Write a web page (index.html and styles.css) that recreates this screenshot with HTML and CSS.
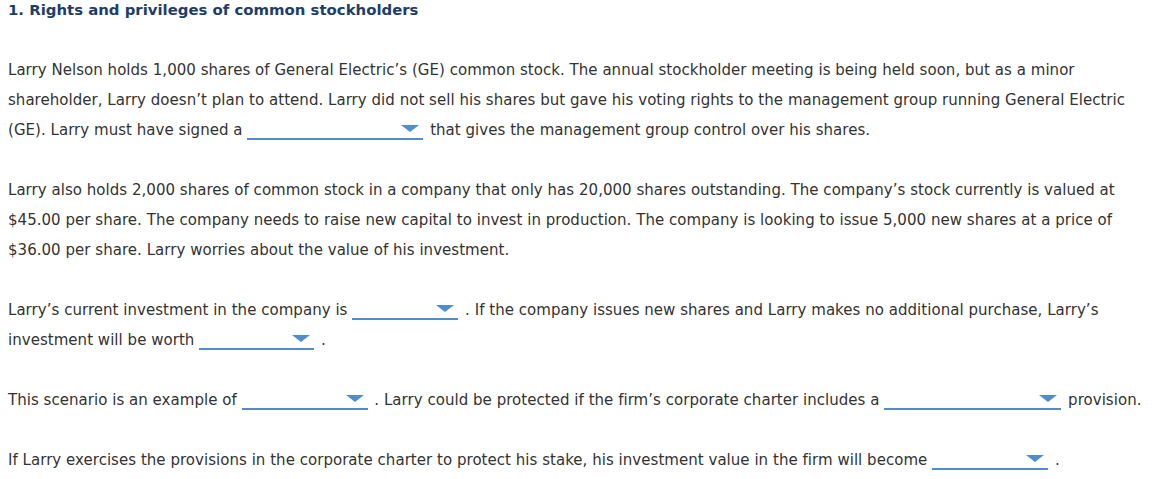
FILE: index.html
```html
<!DOCTYPE html>
<html lang="en">
<head>
<meta charset="utf-8">
<title>Rights and privileges of common stockholders</title>
<link rel="stylesheet" href="styles.css">
</head>
<body>
<div class="page">
  <h1 class="title">1. Rights and privileges of common stockholders</h1>
  <p class="para">Larry Nelson holds 1,000 shares of General Electric’s (GE) common stock. The annual stockholder meeting is being held soon, but as a minor shareholder, Larry doesn’t plan to attend. Larry did not sell his shares but gave his voting rights to the management group running General Electric (GE). Larry must have signed a <span class="dd w176"><svg class="tri" viewBox="0 0 18 7" width="18" height="7"><polygon points="0,0 18,0 9,7" /></svg></span> that gives the management group control over his shares.</p>
  <p class="para">Larry also holds 2,000 shares of common stock in a company that only has 20,000 shares outstanding. The company’s stock currently is valued at $45.00 per share. The company needs to raise new capital to invest in production. The company is looking to issue 5,000 new shares at a price of $36.00 per share. Larry worries about the value of his investment.</p>
  <p class="para">Larry’s current investment in the company is <span class="dd w106"><svg class="tri" viewBox="0 0 18 7" width="18" height="7"><polygon points="0,0 18,0 9,7" /></svg></span> . If the company issues new shares and Larry makes no additional purchase, Larry’s investment will be worth <span class="dd w115"><svg class="tri" viewBox="0 0 18 7" width="18" height="7"><polygon points="0,0 18,0 9,7" /></svg></span> .</p>
  <p class="para">This scenario is an example of <span class="dd w126"><svg class="tri" viewBox="0 0 18 7" width="18" height="7"><polygon points="0,0 18,0 9,7" /></svg></span> . Larry could be protected if the firm’s corporate charter includes a <span class="dd w177"><svg class="tri" viewBox="0 0 18 7" width="18" height="7"><polygon points="0,0 18,0 9,7" /></svg></span> provision.</p>
  <p class="para">If Larry exercises the provisions in the corporate charter to protect his stake, his investment value in the firm will become <span class="dd w116"><svg class="tri" viewBox="0 0 18 7" width="18" height="7"><polygon points="0,0 18,0 9,7" /></svg></span> .</p>
</div>
</body>
</html>
```

FILE: styles.css
```css
html, body {
  margin: 0;
  padding: 0;
  background: #ffffff;
}

.page {
  width: 1150px;
  padding: 0 8px;
  font-family: "DejaVu Sans", Verdana, sans-serif;
  font-size: 15px;
  color: #333333;
}

.title {
  margin: 0;
  font-size: 14.9px;
  line-height: 20px;
  font-weight: bold;
  color: #1d3e6b;
}

.para {
  margin: 30px 0 0 0;
  line-height: 30px;
  letter-spacing: 0.035px;
}

.title + .para {
  margin-top: 35px;
}

.dd {
  display: inline-block;
  box-sizing: border-box;
  line-height: 15px;
  border-bottom: 2px solid #4f8ecb;
  text-align: right;
  padding-right: 4px;
  margin: 0 2px 0 0;
}

.tri {
  display: inline-block;
  vertical-align: 3px;
  fill: #4f8ecb;
}

.w176 { width: 176px; }
.w106 { width: 106px; }
.w115 { width: 115px; }
.w126 { width: 126px; }
.w177 { width: 177px; }
.w116 { width: 116px; }
```
